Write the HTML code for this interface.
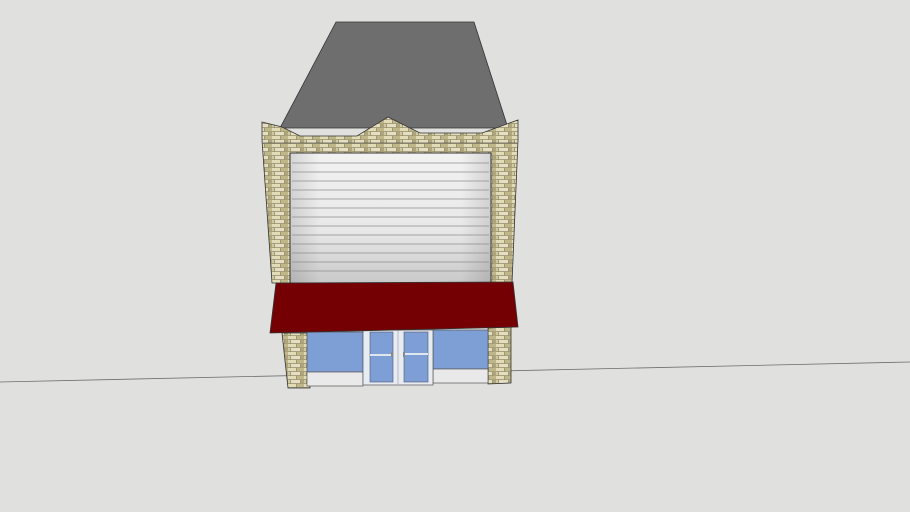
<!DOCTYPE html>
<html><head><style>html,body{margin:0;padding:0;background:#e0e0df;}svg{display:block}</style></head>
<body>
<svg width="910" height="512" viewBox="0 0 910 512" xmlns="http://www.w3.org/2000/svg">
<defs>
<pattern id="st" width="16" height="8" patternUnits="userSpaceOnUse">
<rect width="16" height="8" fill="#d2caa0"/>
<rect x="0" y="0" width="8" height="3" fill="#e2dbb8"/>
<rect x="9" y="0" width="7" height="3" fill="#bfb68a"/>
<rect x="3" y="4" width="9" height="3" fill="#e4dfc2"/>
<rect x="13" y="4" width="3" height="3" fill="#aea57a"/>
<path d="M0 3.5H16M0 7.5H16M8.5 0V3.5M12.5 4V7.5M2.5 4V7.5" stroke="#7d7656" stroke-width="0.6"/>
</pattern>
<linearGradient id="gd" x1="0" y1="0" x2="0" y2="1">
<stop offset="0" stop-color="#f2f2f2"/><stop offset="0.6" stop-color="#e8e8e8"/><stop offset="1" stop-color="#c9c9c9"/>
</linearGradient>
<linearGradient id="gx" x1="0" y1="0" x2="1" y2="0">
<stop offset="0" stop-color="#000" stop-opacity="0.12"/><stop offset="0.15" stop-color="#000" stop-opacity="0"/><stop offset="0.85" stop-color="#000" stop-opacity="0"/><stop offset="1" stop-color="#000" stop-opacity="0.12"/>
</linearGradient>
</defs>
<rect width="910" height="512" fill="#e0e0df"/>
<line x1="0" y1="382" x2="910" y2="362" stroke="#6e6e6e" stroke-width="0.8"/>
<polygon points="336,22 474,22 508,128 280,128" fill="#6f6e6f" stroke="#333" stroke-width="0.8"/>
<polygon points="262,122 282,127 300,136 357,136 388,117 420,133 482,133 518,120 518,140 512,283 272,283 262,140" fill="url(#st)" stroke="#333" stroke-width="0.8"/>
<line x1="263" y1="143" x2="517" y2="143" stroke="#555" stroke-width="0.7"/>
<rect x="290" y="153" width="201" height="130" fill="url(#gd)" stroke="#333" stroke-width="1"/>
<rect x="290" y="153" width="201" height="130" fill="url(#gx)"/>
<g stroke="#8e8e8e" stroke-width="0.8">
<line x1="292" y1="163" x2="489" y2="163"/><line x1="292" y1="172" x2="489" y2="172"/><line x1="292" y1="181" x2="489" y2="181"/><line x1="292" y1="190" x2="489" y2="190"/><line x1="292" y1="199" x2="489" y2="199"/><line x1="292" y1="208" x2="489" y2="208"/><line x1="292" y1="217" x2="489" y2="217"/><line x1="292" y1="226" x2="489" y2="226"/><line x1="292" y1="235" x2="489" y2="235"/><line x1="292" y1="244" x2="489" y2="244"/><line x1="292" y1="253" x2="489" y2="253"/><line x1="292" y1="262" x2="489" y2="262"/><line x1="292" y1="271" x2="489" y2="271"/>
</g>
<polygon points="282,333 308,333 310,388 288,388" fill="url(#st)" stroke="#333" stroke-width="0.8"/>
<polygon points="488,328 511,327 511,383 488,384" fill="url(#st)" stroke="#333" stroke-width="0.8"/>
<rect x="307" y="332" width="56" height="40" fill="#7e9fd6" stroke="#555" stroke-width="0.7"/>
<rect x="307" y="372" width="56" height="14" fill="#e9e9e9" stroke="#555" stroke-width="0.7"/>
<rect x="433" y="330" width="55" height="39" fill="#7e9fd6" stroke="#555" stroke-width="0.7"/>
<rect x="433" y="369" width="55" height="14" fill="#e9e9e9" stroke="#555" stroke-width="0.7"/>
<rect x="363" y="330" width="70" height="55" fill="#e6ecf2" stroke="#555" stroke-width="0.7"/>
<rect x="370" y="332" width="23" height="50" fill="#7e9fd6" stroke="#556" stroke-width="0.6"/>
<rect x="404" y="332" width="24" height="50" fill="#7e9fd6" stroke="#556" stroke-width="0.6"/>
<line x1="370" y1="355" x2="393" y2="355" stroke="#dfe6ee" stroke-width="2"/>
<line x1="404" y1="354" x2="428" y2="354" stroke="#dfe6ee" stroke-width="2"/>
<line x1="398" y1="330" x2="398" y2="384" stroke="#999" stroke-width="0.6"/>
<rect x="391" y="352" width="2" height="5" fill="#888"/><rect x="403" y="352" width="2" height="5" fill="#888"/>
<polygon points="276,283 513,282 518,327 270,333" fill="#750004" stroke="#333" stroke-width="0.8"/>
</svg>
</body></html>
